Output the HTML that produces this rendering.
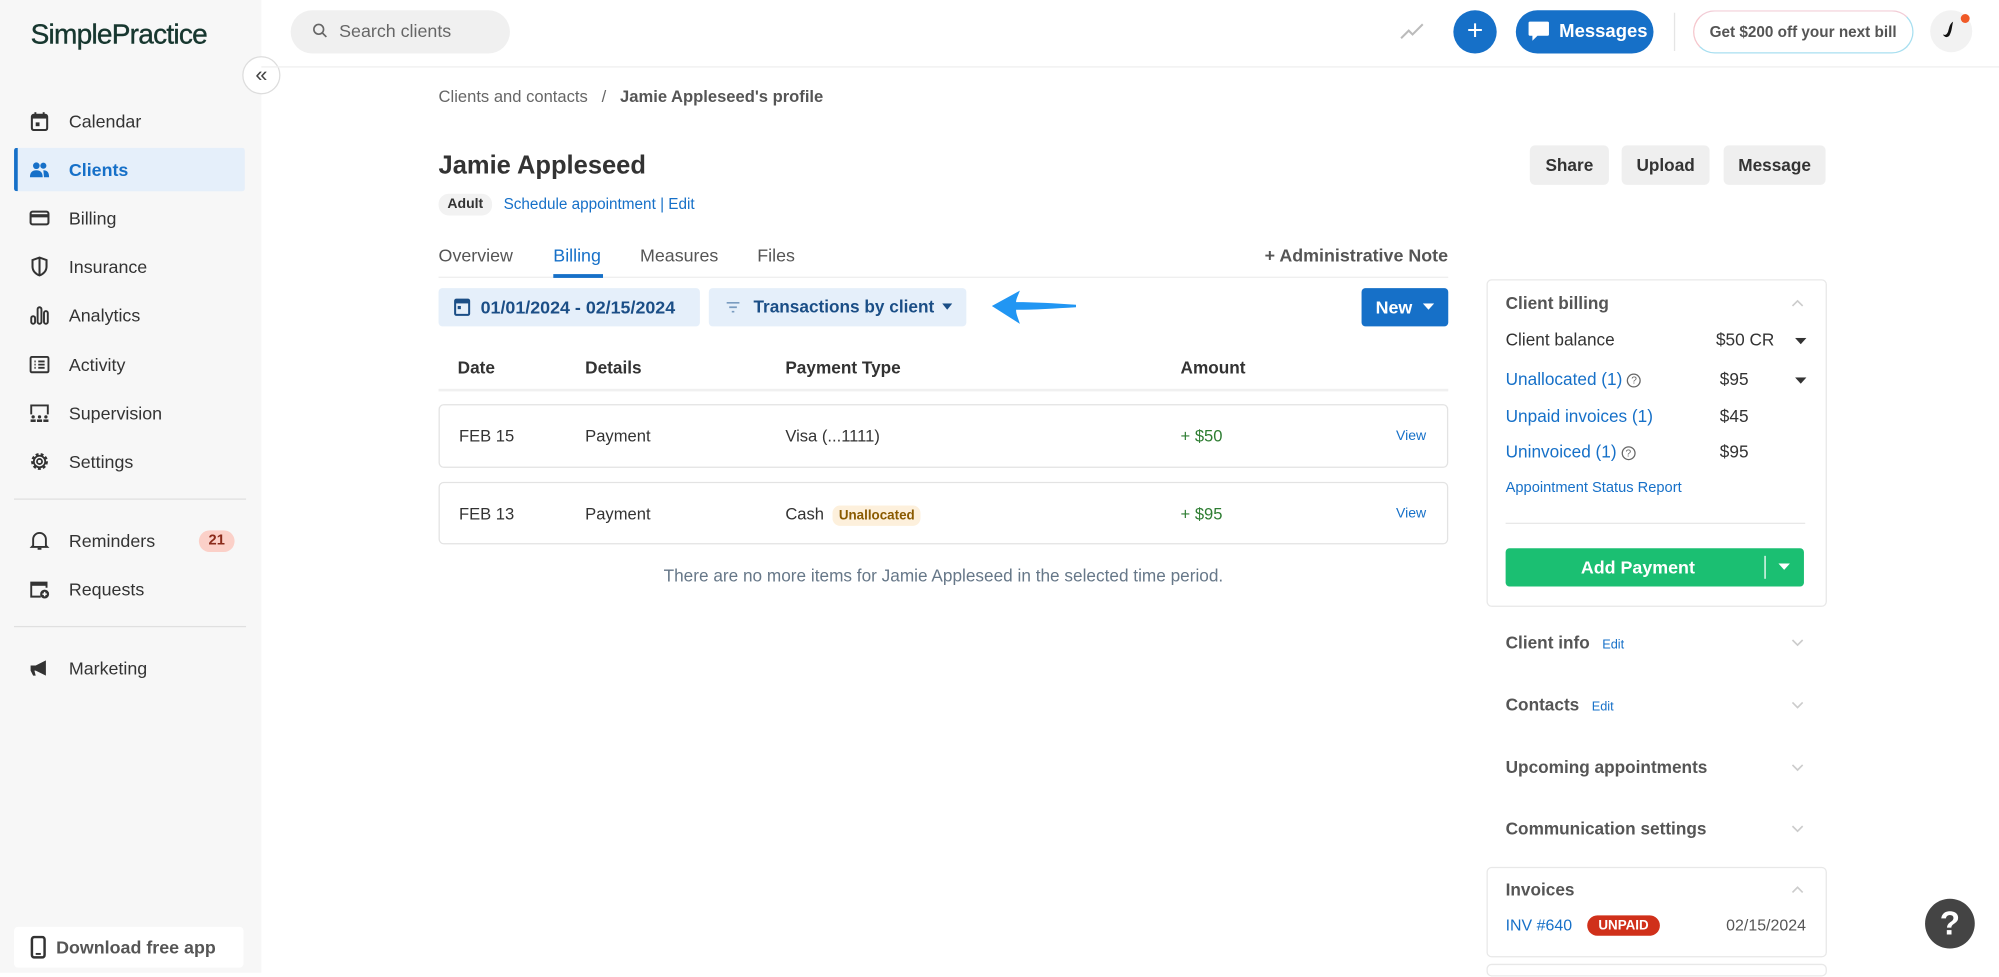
<!DOCTYPE html>
<html><head><meta charset="utf-8"><style>
*{box-sizing:border-box;margin:0;padding:0}
html,body{width:1999px;height:973px;overflow:hidden;background:#fff;font-family:"Liberation Sans",Arial,sans-serif}
#w{position:absolute;left:0;top:0;width:1568px;height:763px;transform:scale(1.27487);transform-origin:0 0;color:#333}
.a{position:absolute;white-space:nowrap}
.sb{position:absolute;left:0;top:0;width:205px;height:763px;background:#f7f7f7}
.nav{position:absolute;left:54px;font-size:14px;color:#333;transform:translateY(-50%)}
.ic{position:absolute;left:23px;width:16px;height:16px;transform:translateY(-50%)}
.btn{position:absolute;background:#efefef;border-radius:4px;font-size:13.5px;font-weight:bold;color:#333;display:flex;align-items:center;justify-content:center}
.blue{color:#1670c8}
.row{position:absolute;left:344px;width:792px;border:1px solid #e3e3e3;border-radius:4px;font-size:13px;color:#333}
.row span{position:absolute;top:50%;transform:translateY(-50%)}
.sec{position:absolute;left:1181px;font-size:13.5px;font-weight:bold;color:#555;transform:translateY(-50%)}
.chev{position:absolute;left:1405px;width:10px;height:10px}
</style></head><body><div id="w">
<div class="sb"></div>
<div class="a" style="left:24px;top:14px;font-size:22px;color:#17372f;letter-spacing:-0.6px;-webkit-text-stroke:0.3px #17372f">SimplePractice</div>
<div class="a" style="left:190px;top:44px;width:30px;height:30px;border-radius:50%;background:#fff;border:1px solid #ddd;text-align:center;line-height:27px;font-size:17px;color:#444">«</div>

<div class="a" style="left:11px;top:116px;width:181px;height:34px;background:#e5effa;border-left:3px solid #1670c8;border-radius:2px"></div>
<svg class="ic" style="top:95px" viewBox="0 0 16 16"><rect x="2" y="3" width="12" height="12" rx="1.5" fill="none" stroke="#333" stroke-width="1.6"/><rect x="2" y="3" width="12" height="3" fill="#333"/><rect x="4" y="1" width="1.5" height="3" fill="#333"/><rect x="10.5" y="1" width="1.5" height="3" fill="#333"/><rect x="5" y="9" width="3" height="3" fill="#333"/></svg>
<div class="nav" style="top:95px">Calendar</div>
<svg class="ic" style="top:133px" viewBox="0 0 16 16"><circle cx="5.5" cy="5" r="2.6" fill="#1670c8"/><circle cx="11" cy="5" r="2.4" fill="#1670c8"/><path d="M0.5 14c0-4 2-5.5 5-5.5s5 1.5 5 5.5z M11 8.5c3 0 4.5 1.5 4.5 5.5h-4z" fill="#1670c8"/></svg>
<div class="nav" style="top:133px;color:#1670c8;font-weight:bold">Clients</div>
<svg class="ic" style="top:171px" viewBox="0 0 16 16"><rect x="1" y="3" width="14" height="10" rx="1.5" fill="none" stroke="#333" stroke-width="1.6"/><rect x="1" y="5" width="14" height="2.5" fill="#333"/></svg>
<div class="nav" style="top:171px">Billing</div>
<svg class="ic" style="top:209px" viewBox="0 0 16 16"><path d="M8 1L2.5 3v5c0 3.5 2.5 6 5.5 7 3-1 5.5-3.5 5.5-7V3z" fill="none" stroke="#333" stroke-width="1.6"/><path d="M8 1v14" stroke="#333" stroke-width="1.6"/></svg>
<div class="nav" style="top:209px">Insurance</div>
<svg class="ic" style="top:247px" viewBox="0 0 16 16"><g fill="none" stroke="#333" stroke-width="1.5"><rect x="1.5" y="9" width="3" height="6" rx="1.5"/><rect x="6.5" y="2" width="3" height="13" rx="1.5"/><rect x="11.5" y="5" width="3" height="10" rx="1.5"/></g></svg>
<div class="nav" style="top:247px">Analytics</div>
<svg class="ic" style="top:286px" viewBox="0 0 16 16"><rect x="1" y="2" width="14" height="12" rx="1" fill="none" stroke="#333" stroke-width="1.5"/><path d="M4 5.5h1M7 5.5h5M4 8h1M7 8h5M4 10.5h1M7 10.5h5" stroke="#333" stroke-width="1.4"/></svg>
<div class="nav" style="top:286px">Activity</div>
<svg class="ic" style="top:324px" viewBox="0 0 16 16"><path d="M1.5 9V2h13v7" fill="none" stroke="#333" stroke-width="1.5"/><g fill="#333"><circle cx="3" cy="11" r="1.3"/><circle cx="8" cy="11" r="1.3"/><circle cx="13" cy="11" r="1.3"/><rect x="1" y="13" width="4" height="2"/><rect x="6" y="13" width="4" height="2"/><rect x="11" y="13" width="4" height="2"/></g></svg>
<div class="nav" style="top:324px">Supervision</div>
<svg class="ic" style="top:362px" viewBox="0 0 16 16"><circle cx="8" cy="8" r="5.5" fill="none" stroke="#333" stroke-width="2.2" stroke-dasharray="2.2 1.6"/><circle cx="8" cy="8" r="4.5" fill="none" stroke="#333" stroke-width="1.4"/><circle cx="8" cy="8" r="2" fill="none" stroke="#333" stroke-width="1.4"/></svg>
<div class="nav" style="top:362px">Settings</div>
<div class="a" style="left:11px;top:391px;width:182px;height:1px;background:#e0e0e0"></div>
<svg class="ic" style="top:424px" viewBox="0 0 16 16"><path d="M3 12V7a5 5 0 0 1 10 0v5l1 1H2z" fill="none" stroke="#333" stroke-width="1.5"/><path d="M6.5 14.5h3" stroke="#333" stroke-width="1.5"/></svg>
<div class="nav" style="top:424px">Reminders</div>
<div class="a" style="left:156px;top:416px;width:28px;height:17px;border-radius:9px;background:#fbd0c8;color:#8a2a1a;font-size:11.5px;font-weight:bold;text-align:center;line-height:17px">21</div>
<svg class="ic" style="top:462px" viewBox="0 0 16 16"><path d="M9 14H1.5V3h12v4" fill="none" stroke="#333" stroke-width="1.5"/><rect x="1.5" y="3" width="12" height="2.5" fill="#333"/><circle cx="12" cy="12" r="3.5" fill="#333"/><path d="M12 10.3v3.4M10.3 12h3.4" stroke="#fff" stroke-width="1.2"/></svg>
<div class="nav" style="top:462px">Requests</div>
<div class="a" style="left:11px;top:491px;width:182px;height:1px;background:#e0e0e0"></div>
<svg class="ic" style="top:524px" viewBox="0 0 16 16"><path d="M1 6h4l8-4v12l-8-4H4l1 4H3l-2-4z" fill="#333"/></svg>
<div class="nav" style="top:524px">Marketing</div>
<div class="a" style="left:11px;top:727px;width:180px;height:32px;background:#fff;border-radius:3px"></div>
<svg class="a" style="left:24px;top:734px" width="12" height="18" viewBox="0 0 12 18"><rect x="1" y="1" width="10" height="16" rx="2" fill="none" stroke="#333" stroke-width="2"/><rect x="4" y="13.5" width="4" height="1.5" fill="#333"/></svg>
<div class="a" style="left:44px;top:735px;font-size:14px;font-weight:bold;color:#555">Download free app</div>

<!-- top bar -->
<div class="a" style="left:205px;top:52px;width:1363px;height:1px;background:#eee"></div>
<div class="a" style="left:228px;top:8px;width:172px;height:34px;border-radius:17px;background:#f0f0f0"></div>
<svg class="a" style="left:245px;top:18px" width="12" height="12" viewBox="0 0 12 12"><circle cx="5" cy="5" r="3.8" fill="none" stroke="#666" stroke-width="1.3"/><path d="M8 8l3 3" stroke="#666" stroke-width="1.3"/></svg>
<div class="a" style="left:266px;top:16px;font-size:14px;color:#666">Search clients</div>
<svg class="a" style="left:1098px;top:17px" width="19" height="14" viewBox="0 0 19 14"><path d="M1 13l6-6 3 3 8-8" fill="none" stroke="#bbb" stroke-width="1.6"/></svg>
<div class="a" style="left:1140px;top:8px;width:34px;height:34px;border-radius:50%;background:#1670c8;color:#fff;text-align:center;line-height:32px;font-size:22px">+</div>
<div class="a" style="left:1189px;top:8px;width:108px;height:34px;border-radius:17px;background:#1670c8"></div>
<svg class="a" style="left:1198px;top:16px" width="18" height="18" viewBox="0 0 18 18"><path d="M2 1h14a1 1 0 0 1 1 1v9a1 1 0 0 1-1 1H8l-4 4v-4H2a1 1 0 0 1-1-1V2a1 1 0 0 1 1-1z" fill="#fff"/></svg>
<div class="a" style="left:1223px;top:8px;height:34px;line-height:34px;font-size:14.5px;font-weight:bold;color:#fff">Messages</div>
<div class="a" style="left:1313px;top:10px;width:1px;height:30px;background:#e5e5e5"></div>
<div class="a" style="left:1328px;top:8px;width:173px;height:34px;border-radius:17px;border:1px solid #a8dff0;border-left-color:#f5c6cc;border-top-color:#f2ccd6"></div>
<div class="a" style="left:1341px;top:8px;height:34px;line-height:34px;font-size:12px;font-weight:bold;color:#555">Get $200 off your next bill</div>
<div class="a" style="left:1514px;top:8px;width:33px;height:33px;border-radius:50%;background:#f2f2f2"></div>
<svg class="a" style="left:1520px;top:14px" width="20" height="20" viewBox="0 0 20 20"><path d="M12 3c-1 4-1 8-3 11-2 2-4 1-5-1 2 1 3 0 4-2 1-3 1-6 4-8z" fill="#111"/></svg>
<div class="a" style="left:1538px;top:11px;width:7px;height:7px;border-radius:50%;background:#f05a28"></div>

<!-- header -->
<div class="a" style="left:344px;top:68px;font-size:13px;color:#666">Clients and contacts &nbsp; / &nbsp; <b style="color:#555">Jamie Appleseed's profile</b></div>
<div class="a" style="left:344px;top:119px;font-size:20px;font-weight:bold;color:#333">Jamie Appleseed</div>
<div class="a" style="left:344px;top:152px;width:42px;height:17px;border-radius:8px;background:#f2f2f2;font-size:11px;font-weight:bold;text-align:center;line-height:17px">Adult</div>
<div class="a blue" style="left:395px;top:153px;font-size:12px">Schedule appointment | Edit</div>
<div class="btn" style="left:1200px;top:114px;width:62px;height:31px">Share</div>
<div class="btn" style="left:1272px;top:114px;width:69px;height:31px">Upload</div>
<div class="btn" style="left:1352px;top:114px;width:80px;height:31px">Message</div>

<!-- tabs -->
<div class="a" style="left:344px;top:192px;font-size:14px;color:#555">Overview</div>
<div class="a blue" style="left:434px;top:192px;font-size:14px">Billing</div>
<div class="a" style="left:502px;top:192px;font-size:14px;color:#555">Measures</div>
<div class="a" style="left:594px;top:192px;font-size:14px;color:#555">Files</div>
<div class="a" style="left:992px;top:192px;font-size:14px;font-weight:bold;color:#555">+ Administrative Note</div>
<div class="a" style="left:344px;top:217px;width:792px;height:1px;background:#eee"></div>
<div class="a" style="left:434px;top:215px;width:39px;height:3px;background:#1670c8"></div>

<div class="a" style="left:344px;top:226px;width:205px;height:30px;border-radius:3px;background:#e5effa"></div>
<svg class="a" style="left:356px;top:234px" width="13" height="14" viewBox="0 0 13 14"><rect x="1" y="1" width="11" height="12" rx="1" fill="none" stroke="#1b4e86" stroke-width="1.6"/><rect x="1" y="1" width="11" height="3" fill="#1b4e86"/><rect x="3" y="6" width="2.5" height="2.5" fill="#1b4e86"/></svg>
<div class="a" style="left:377px;top:233px;font-size:14px;font-weight:bold;color:#1b4e86">01/01/2024 - 02/15/2024</div>
<div class="a" style="left:556px;top:226px;width:202px;height:30px;border-radius:3px;background:#e5effa"></div>
<svg class="a" style="left:569px;top:236px" width="12" height="10" viewBox="0 0 12 10"><path d="M1 1.5h10M3 5h6M5 8.5h2" stroke="#7a9cc0" stroke-width="1.3"/></svg>
<div class="a" style="left:591px;top:233px;font-size:13.5px;font-weight:bold;color:#1b4e86">Transactions by client</div>
<svg class="a" style="left:739px;top:238px" width="8" height="5"><path d="M0 0h8L4 5z" fill="#1b4e86"/></svg>
<svg class="a" style="left:776px;top:227px" width="70" height="28" viewBox="0 0 70 28"><path d="M2 13L24 1c-2 5-3 7-3 9 15 0 30 1 47 2v2c-17 1-32 2-47 2 0 3 1 5 3 11z" fill="#2196f3"/></svg>
<div class="a" style="left:1068px;top:226px;width:68px;height:30px;border-radius:3px;background:#1670c8"></div>
<div class="a" style="left:1079px;top:233px;font-size:14px;font-weight:bold;color:#fff">New</div>
<svg class="a" style="left:1116px;top:238px" width="9" height="5"><path d="M0 0h9L4.5 5z" fill="#fff"/></svg>

<!-- table -->
<div class="a" style="left:359px;top:281px;font-size:13.5px;font-weight:bold">Date</div>
<div class="a" style="left:459px;top:281px;font-size:13.5px;font-weight:bold">Details</div>
<div class="a" style="left:616px;top:281px;font-size:13.5px;font-weight:bold">Payment Type</div>
<div class="a" style="left:926px;top:281px;font-size:13.5px;font-weight:bold">Amount</div>
<div class="a" style="left:344px;top:305px;width:792px;height:2px;background:#f0f0f0"></div>
<div class="row" style="top:317px;height:50px"><span style="left:15px">FEB 15</span><span style="left:114px">Payment</span><span style="left:271px">Visa (...1111)</span><span style="left:581px;color:#2e7d32">+ $50</span><span style="left:750px;font-size:11px;color:#1670c8">View</span></div>
<div class="row" style="top:378px;height:49px"><span style="left:15px">FEB 13</span><span style="left:114px">Payment</span><span style="left:271px">Cash <i style="font-style:normal;background:#fdf0dc;color:#8a5a00;font-size:10.5px;font-weight:bold;padding:2px 5px;border-radius:6px;margin-left:3px">Unallocated</i></span><span style="left:581px;color:#2e7d32">+ $95</span><span style="left:750px;font-size:11px;color:#1670c8">View</span></div>
<div class="a" style="left:740px;top:444px;transform:translateX(-50%);font-size:13.5px;color:#667788">There are no more items for Jamie Appleseed in the selected time period.</div>

<!-- right panel -->
<div class="a" style="left:1166px;top:219px;width:267px;height:257px;border:1px solid #e8e8e8;border-radius:4px"></div>
<div class="sec" style="top:238px">Client billing</div>
<svg class="chev" style="top:233px" viewBox="0 0 10 10"><path d="M1 7l4-4 4 4" fill="none" stroke="#ccc" stroke-width="1.3"/></svg>
<div class="a" style="left:1181px;top:259px;font-size:13.5px">Client balance</div>
<div class="a" style="left:1346px;top:259px;font-size:13.5px">$50 CR</div>
<svg class="a" style="left:1408px;top:265px" width="9" height="5"><path d="M0 0h9L4.5 5z" fill="#333"/></svg>
<div class="a blue" style="left:1181px;top:290px;font-size:13.5px">Unallocated (1) <span style="display:inline-block;width:11px;height:11px;border:1px solid #666;border-radius:50%;font-size:8px;color:#666;text-align:center;line-height:10px;vertical-align:1px">?</span></div>
<div class="a" style="left:1349px;top:290px;font-size:13.5px">$95</div>
<svg class="a" style="left:1408px;top:296px" width="9" height="5"><path d="M0 0h9L4.5 5z" fill="#333"/></svg>
<div class="a blue" style="left:1181px;top:319px;font-size:13.5px">Unpaid invoices (1)</div>
<div class="a" style="left:1349px;top:319px;font-size:13.5px">$45</div>
<div class="a blue" style="left:1181px;top:347px;font-size:13.5px">Uninvoiced (1) <span style="display:inline-block;width:11px;height:11px;border:1px solid #666;border-radius:50%;font-size:8px;color:#666;text-align:center;line-height:10px;vertical-align:1px">?</span></div>
<div class="a" style="left:1349px;top:347px;font-size:13.5px">$95</div>
<div class="a blue" style="left:1181px;top:377px;font-size:11.5px">Appointment Status Report</div>
<div class="a" style="left:1181px;top:410px;width:235px;height:1px;background:#e8e8e8"></div>
<div class="a" style="left:1181px;top:430px;width:234px;height:30px;border-radius:3px;background:#1bbf72"></div>
<div class="a" style="left:1240px;top:437px;font-size:14px;font-weight:bold;color:#fff">Add Payment</div>
<div class="a" style="left:1384px;top:436px;width:1px;height:18px;background:#fff"></div>
<svg class="a" style="left:1395px;top:442px" width="9" height="5"><path d="M0 0h9L4.5 5z" fill="#fff"/></svg>

<div class="sec" style="top:504px">Client info <span style="font-size:10px;font-weight:normal;color:#1670c8;margin-left:6px">Edit</span></div>
<svg class="chev" style="top:499px" viewBox="0 0 10 10"><path d="M1 3l4 4 4-4" fill="none" stroke="#ccc" stroke-width="1.3"/></svg>
<div class="sec" style="top:553px">Contacts <span style="font-size:10px;font-weight:normal;color:#1670c8;margin-left:6px">Edit</span></div>
<svg class="chev" style="top:548px" viewBox="0 0 10 10"><path d="M1 3l4 4 4-4" fill="none" stroke="#ccc" stroke-width="1.3"/></svg>
<div class="sec" style="top:602px">Upcoming appointments</div>
<svg class="chev" style="top:597px" viewBox="0 0 10 10"><path d="M1 3l4 4 4-4" fill="none" stroke="#ccc" stroke-width="1.3"/></svg>
<div class="sec" style="top:650px">Communication settings</div>
<svg class="chev" style="top:645px" viewBox="0 0 10 10"><path d="M1 3l4 4 4-4" fill="none" stroke="#ccc" stroke-width="1.3"/></svg>

<div class="a" style="left:1166px;top:680px;width:267px;height:71px;border:1px solid #e8e8e8;border-radius:4px"></div>
<div class="a" style="left:1166px;top:756px;width:267px;height:10px;border:1px solid #e8e8e8;border-radius:4px"></div>
<div class="sec" style="top:698px">Invoices</div>
<svg class="chev" style="top:693px" viewBox="0 0 10 10"><path d="M1 7l4-4 4 4" fill="none" stroke="#ccc" stroke-width="1.3"/></svg>
<div class="a blue" style="left:1181px;top:719px;font-size:12.5px">INV #640</div>
<div class="a" style="left:1245px;top:718px;width:57px;height:16px;border-radius:8px;background:#d0301a;color:#fff;font-size:10.5px;font-weight:bold;text-align:center;line-height:16px">UNPAID</div>
<div class="a" style="left:1354px;top:719px;font-size:12.5px;color:#555">02/15/2024</div>

<div class="a" style="left:1510px;top:705px;width:39px;height:39px;border-radius:50%;background:#444;color:#fff;font-size:26px;font-weight:bold;text-align:center;line-height:39px">?</div>
</div></body></html>
